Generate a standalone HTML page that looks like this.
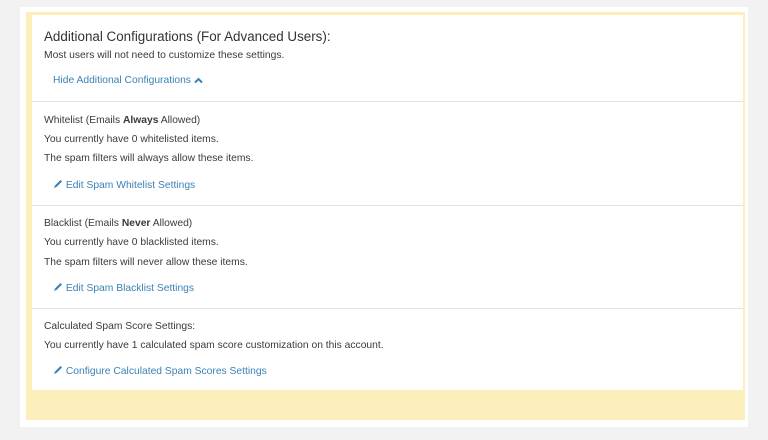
<!DOCTYPE html>
<html><head><style>
body{margin:0;width:768px;height:440px;background:#f2f2f2;font-family:"Liberation Sans",sans-serif;position:relative;overflow:hidden}
.card{position:absolute;left:20px;top:7px;width:728px;height:420px;background:#fff}
.yl{position:absolute;left:26px;top:12px;width:719px;height:408px;background:#fcefbb}
.in{position:absolute;left:32px;top:15px;width:711px;height:375px;background:#fff}
.t{position:absolute;left:44px;font-size:10.3px;color:#3a3a3a;white-space:nowrap}
.a{color:#3a82b6}
.h{position:absolute;left:32px;width:711px;height:1px;background:#e2e2e2}
svg{vertical-align:-1px}
</style></head><body>
<div class="card"></div><div class="yl"></div><div class="in"></div>
<div class="t" style="top:29px;font-size:13.4px;color:#333">Additional Configurations (For Advanced Users):</div>
<div class="t" style="top:50px">Most users will not need to customize these settings.</div>
<div class="t a" style="top:75px;left:53px">Hide Additional Configurations <svg width="9" height="7" viewBox="0 0 9 7"><path d="M1 5.5L4.5 2L8 5.5" stroke="#3a82b6" stroke-width="2" fill="none"/></svg></div>
<div class="h" style="top:101px"></div>
<div class="t" style="top:115px">Whitelist (Emails <b>Always</b> Allowed)</div>
<div class="t" style="top:134px">You currently have 0 whitelisted items.</div>
<div class="t" style="top:153px">The spam filters will always allow these items.</div>
<div class="t a" style="top:179px;left:53px"><svg width="10" height="10" viewBox="0 0 10 10"><path d="M1 9L2 6.5L7.5 1L9 2.5L3.5 8Z" fill="#3a82b6"/></svg> Edit Spam Whitelist Settings</div>
<div class="h" style="top:205px"></div>
<div class="t" style="top:218px">Blacklist (Emails <b>Never</b> Allowed)</div>
<div class="t" style="top:237px">You currently have 0 blacklisted items.</div>
<div class="t" style="top:257px">The spam filters will never allow these items.</div>
<div class="t a" style="top:282px;left:53px"><svg width="10" height="10" viewBox="0 0 10 10"><path d="M1 9L2 6.5L7.5 1L9 2.5L3.5 8Z" fill="#3a82b6"/></svg> Edit Spam Blacklist Settings</div>
<div class="h" style="top:308px"></div>
<div class="t" style="top:321px">Calculated Spam Score Settings:</div>
<div class="t" style="top:340px">You currently have 1 calculated spam score customization on this account.</div>
<div class="t a" style="top:365px;left:53px"><svg width="10" height="10" viewBox="0 0 10 10"><path d="M1 9L2 6.5L7.5 1L9 2.5L3.5 8Z" fill="#3a82b6"/></svg> Configure Calculated Spam Scores Settings</div>
</body></html>
